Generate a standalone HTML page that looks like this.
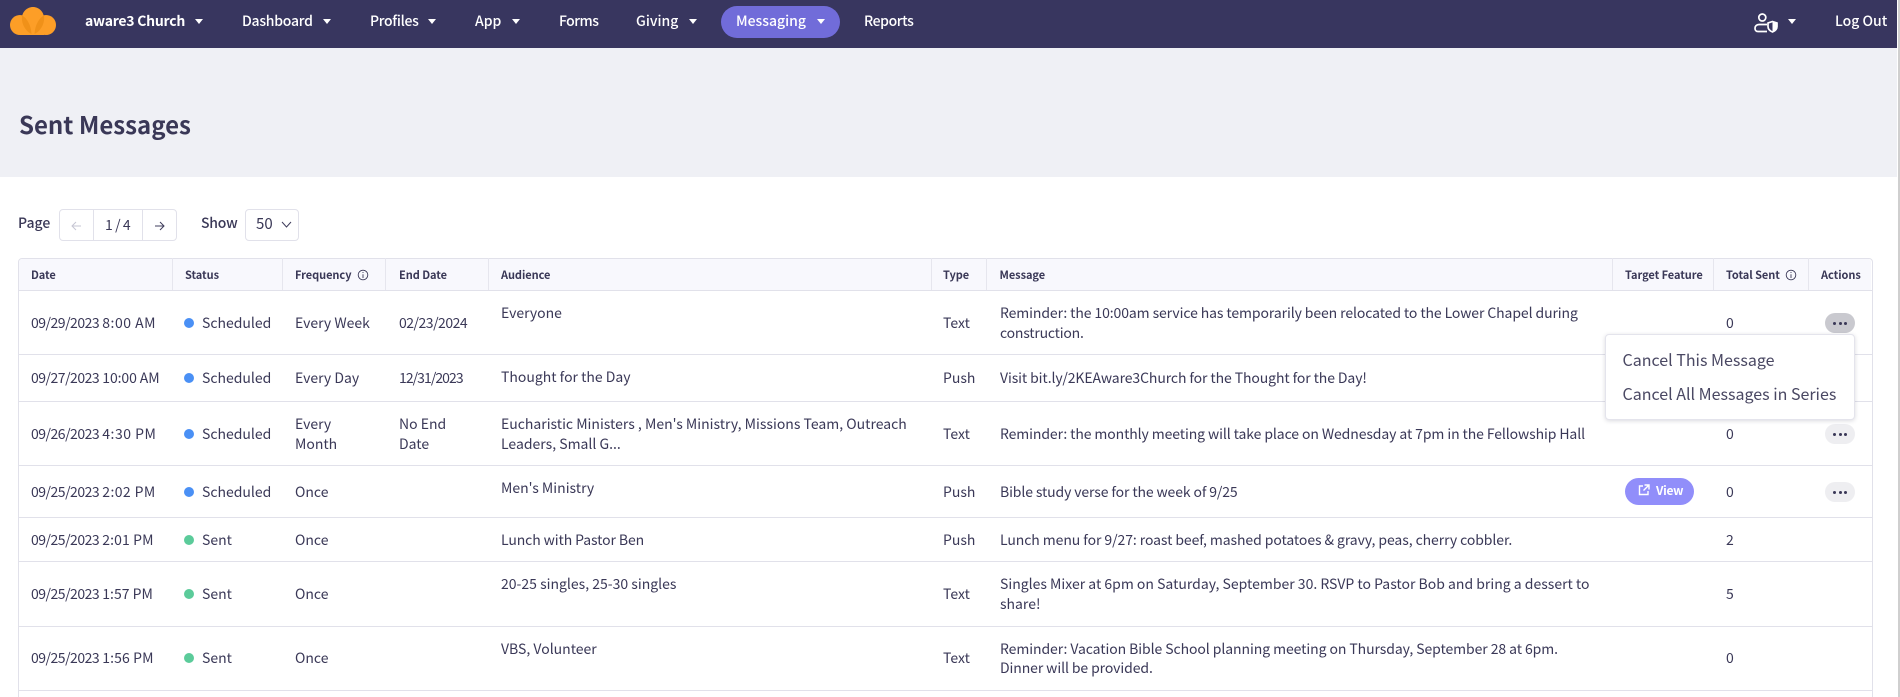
<!DOCTYPE html>
<html><head><meta charset="utf-8"><title>Sent Messages</title>
<style>
html,body{margin:0;padding:0;background:#fff;width:1900px;height:697px;overflow:hidden}
body{position:relative;font-family:"Noto Sans CJK JP","Liberation Sans",sans-serif;color:#3a3857;font-size:14px}
.a{position:absolute}
.t{position:absolute;white-space:nowrap;line-height:20px;height:20px}
.n{color:#fff;font-weight:500;font-size:14px;top:11px}
.h{font-size:11px;font-weight:700;top:265px;color:#3a3857;letter-spacing:-.05px}
.c{position:absolute;width:0;height:0;border-left:4.5px solid transparent;border-right:4.5px solid transparent;border-top:5px solid #fff;top:19px}
.hl{position:absolute;left:19px;width:1853px;height:1px;background:#e1e1ea}
.vl{position:absolute;top:258px;height:32px;width:1px;background:#e6e6ee}
.d{position:absolute;width:10px;height:10px;border-radius:50%;left:184px}
.bl{background:#4a90f5}.gr{background:#5bcb9a}
.b{position:absolute;left:1825px;width:30px;height:20px;border-radius:10px;background:#eeeef1}
.b i{position:absolute;top:9px;width:3px;height:3px;border-radius:50%;background:#3a3857}
.dt{letter-spacing:-.5px}
</style></head><body>
<div class="a" style="left:0;top:0;width:1897px;height:48px;background:#38365f"></div>
<div class="a" style="left:0;top:48px;width:1897px;height:129px;background:#eff0f5"></div>
<div class="a" style="left:1898px;top:0;width:2px;height:697px;background:#cfcfcf"></div>

<svg class="a" style="left:10px;top:7px" width="46" height="28" viewBox="0 0 46 28">
<circle cx="10" cy="18" r="10" fill="#fd9e27"/>
<circle cx="36" cy="18" r="10" fill="#fd9e27"/>
<path d="M12 11C12 5 17 0 23 0C29 0 34 5 34 11V28H10V11Z" fill="#fd9e27"/>
<path d="M12 8.500C17 11 21 18 21.500 27C15 24 11 16 12 8.500Z" fill="#f09119"/>
<path d="M34 8.500C29 11 25 18 24.500 27C31 24 35 16 34 8.500Z" fill="#f09119"/>
</svg>

<span class="t n" style="left:85px;font-weight:700;letter-spacing:-.25px">aware3 Church</span><i class="c" style="left:195px"></i>
<span class="t n" style="left:242px;letter-spacing:-.25px">Dashboard</span><i class="c" style="left:323px"></i>
<span class="t n" style="left:370px;letter-spacing:-.3px">Profiles</span><i class="c" style="left:428px"></i>
<span class="t n" style="left:475px">App</span><i class="c" style="left:512px"></i>
<span class="t n" style="left:559px;letter-spacing:-.5px">Forms</span>
<span class="t n" style="left:636px">Giving</span><i class="c" style="left:689px"></i>
<div class="a" style="left:721px;top:6px;width:119px;height:32px;border-radius:16px;background:#716cd9"></div>
<span class="t n" style="left:736px">Messaging</span><i class="c" style="left:817px"></i>
<span class="t n" style="left:864px;letter-spacing:-.4px">Reports</span>
<svg class="a" style="left:1754px;top:13px" width="24" height="20" viewBox="0 0 24 20" fill="none" stroke="#fff" stroke-width="1.700">
<circle cx="8.300" cy="4.500" r="3.500"/>
<path d="M13 11.500H5C2.500 11.500 1 13.200 1 15.200C1 17 2 18.500 4 18.500H13"/>
<path d="M18.500 8.500L23 10V13.500C23 16 21 18 18.500 19C16 18 14 16 14 13.500V10Z" fill="#38365f"/>
<path d="M18.500 9V18.500C21 17.500 22.500 15.800 22.500 13.500V10.300Z" fill="#fff" stroke="none"/>
</svg>
<i class="c" style="left:1788px"></i>
<span class="t n" style="left:1835px">Log Out</span>

<span class="t" style="left:19px;top:109px;height:30px;line-height:30px;font-size:24px;font-weight:700;color:#3a3857">Sent Messages</span>

<span class="t" style="left:18px;top:213px;font-weight:500">Page</span>
<div class="a" style="left:59px;top:209px;width:116px;height:30px;border:1px solid #e1e1ea;border-radius:4px"></div>
<div class="a" style="left:93px;top:209px;width:1px;height:32px;background:#e1e1ea"></div>
<div class="a" style="left:142px;top:209px;width:1px;height:32px;background:#e1e1ea"></div>
<svg class="a" style="left:71px;top:221px" width="11" height="10" viewBox="0 0 11 10" fill="none" stroke="#c6c6d3" stroke-width="1"><path d="M10 5H1M5 1L1 5L5 9"/></svg>
<span class="t" style="left:105px;top:215px;letter-spacing:-.4px">1 / 4</span>
<svg class="a" style="left:154px;top:221px" width="11" height="10" viewBox="0 0 11 10" fill="none" stroke="#3f3d5c" stroke-width="1"><path d="M1 5H10M6 1L10 5L6 9"/></svg>
<span class="t" style="left:201px;top:213px;font-weight:500;letter-spacing:-.2px">Show</span>
<div class="a" style="left:245px;top:209px;width:52px;height:30px;border:1px solid #e1e1ea;border-radius:4px"></div>
<span class="t" style="left:256px;top:214px;font-size:15px">50</span>
<svg class="a" style="left:281px;top:221px" width="11" height="7" viewBox="0 0 11 7" fill="none" stroke="#3f3d5c" stroke-width="1"><path d="M1 1L5.500 6L10 1"/></svg>

<!-- table frame -->
<div class="a" style="left:18px;top:258px;width:1853px;height:460px;border:1px solid #e1e1ea;border-radius:4px 4px 0 0"></div>
<div class="a" style="left:19px;top:259px;width:1852px;height:31px;background:#f8f8fd;border-radius:3px 3px 0 0"></div>
<div class="hl" style="top:290px"></div>
<div class="hl" style="top:354px"></div>
<div class="hl" style="top:401px"></div>
<div class="hl" style="top:465px"></div>
<div class="hl" style="top:517px"></div>
<div class="hl" style="top:561px"></div>
<div class="hl" style="top:626px"></div>
<div class="hl" style="top:690px"></div>
<div class="vl" style="left:172px"></div><div class="vl" style="left:282px"></div><div class="vl" style="left:385px"></div><div class="vl" style="left:488px"></div><div class="vl" style="left:931px"></div><div class="vl" style="left:986px"></div><div class="vl" style="left:1612px"></div><div class="vl" style="left:1713px"></div><div class="vl" style="left:1808px"></div>

<span class="t h" style="left:31px">Date</span>
<span class="t h" style="left:185px">Status</span>
<span class="t h" style="left:295px">Frequency</span>
<svg class="a" style="left:357px;top:269px" width="12" height="12" viewBox="0 0 12 12" fill="none" stroke="#3a3857" stroke-width=".9"><circle cx="6" cy="6" r="4.800"/><path d="M6 5.300V9M6 3V4"/></svg>
<span class="t h" style="left:399px">End Date</span>
<span class="t h" style="left:501px">Audience</span>
<span class="t h" style="left:943px">Type</span>
<span class="t h" style="left:999.500px">Message</span>
<span class="t h" style="left:1625px">Target Feature</span>
<span class="t h" style="left:1726px">Total Sent</span>
<svg class="a" style="left:1785px;top:269px" width="12" height="12" viewBox="0 0 12 12" fill="none" stroke="#3a3857" stroke-width=".9"><circle cx="6" cy="6" r="4.800"/><path d="M6 5.300V9M6 3V4"/></svg>
<span class="t h" style="left:1821px">Actions</span>

<!-- row 1 -->
<span class="t" style="left:31px;top:313px"><span class="dt">09/29/2023</span> <span style="letter-spacing:.5px">8:00 AM</span></span>
<i class="d bl" style="top:318px"></i><span class="t" style="left:202px;top:313px">Scheduled</span>
<span class="t" style="left:295px;top:313px">Every Week</span>
<span class="t" style="left:399px;top:313px;letter-spacing:-.5px">02/23/2024</span>
<span class="t" style="left:501px;top:303px">Everyone</span>
<span class="t" style="left:943px;top:313px">Text</span>
<span class="t" style="left:1000px;top:303px;letter-spacing:-.1px">Reminder: the 10:00am service has temporarily been relocated to the Lower Chapel during</span>
<span class="t" style="left:1000px;top:323px;letter-spacing:-.2px">construction.</span>
<span class="t" style="left:1726px;top:313px">0</span>
<div class="b" style="top:313px;background:#c9c9cf"><i style="left:8px"></i><i style="left:13.500px"></i><i style="left:19px"></i></div>

<!-- row 2 -->
<span class="t" style="left:31px;top:368px"><span class="dt">09/27/2023</span> <span style="letter-spacing:-.1px">10:00 AM</span></span>
<i class="d bl" style="top:373px"></i><span class="t" style="left:202px;top:368px">Scheduled</span>
<span class="t" style="left:295px;top:368px">Every Day</span>
<span class="t" style="left:399px;top:368px;letter-spacing:-.95px">12/31/2023</span>
<span class="t" style="left:501px;top:367px">Thought for the Day</span>
<span class="t" style="left:943px;top:368px">Push</span>
<span class="t" style="left:1000px;top:368px;letter-spacing:-.1px">Visit bit.ly/2KEAware3Church for the Thought for the Day!</span>

<!-- row 3 -->
<span class="t" style="left:31px;top:424px"><span class="dt">09/26/2023</span> <span style="letter-spacing:.5px">4:30 PM</span></span>
<i class="d bl" style="top:429px"></i><span class="t" style="left:202px;top:424px">Scheduled</span>
<span class="t" style="left:295px;top:414px">Every</span>
<span class="t" style="left:295px;top:434px">Month</span>
<span class="t" style="left:399px;top:414px">No End</span>
<span class="t" style="left:399px;top:434px">Date</span>
<span class="t" style="left:501px;top:414px">Eucharistic Ministers , Men's Ministry, Missions Team, Outreach</span>
<span class="t" style="left:501px;top:434px">Leaders, Small G...</span>
<span class="t" style="left:943px;top:424px">Text</span>
<span class="t" style="left:1000px;top:424px;letter-spacing:-.1px">Reminder: the monthly meeting will take place on Wednesday at 7pm in the Fellowship Hall</span>
<span class="t" style="left:1726px;top:424px">0</span>
<div class="b" style="top:424px"><i style="left:8px"></i><i style="left:13.500px"></i><i style="left:19px"></i></div>

<!-- row 4 -->
<span class="t" style="left:31px;top:482px"><span class="dt">09/25/2023</span> <span style="letter-spacing:.4px">2:02 PM</span></span>
<i class="d bl" style="top:487px"></i><span class="t" style="left:202px;top:482px">Scheduled</span>
<span class="t" style="left:295px;top:482px">Once</span>
<span class="t" style="left:501px;top:478px">Men's Ministry</span>
<span class="t" style="left:943px;top:482px">Push</span>
<span class="t" style="left:1000px;top:482px;letter-spacing:-.12px">Bible study verse for the week of 9/25</span>
<div class="a" style="left:1625px;top:478px;width:69px;height:27px;border-radius:14px;background:#918efa"></div>
<svg class="a" style="left:1638px;top:484px" width="12" height="12" viewBox="0 0 12 12" fill="none" stroke="#fff" stroke-width="1.400"><path d="M5 2H1.500V10.500H10V7M6.500 1H11V5.500M11 1L5.500 6.500"/></svg>
<span class="t" style="left:1656px;top:481px;font-size:12px;font-weight:700;color:#fff;letter-spacing:-.3px">View</span>
<span class="t" style="left:1726px;top:482px">0</span>
<div class="b" style="top:482px"><i style="left:8px"></i><i style="left:13.500px"></i><i style="left:19px"></i></div>

<!-- row 5 -->
<span class="t" style="left:31px;top:530px"><span class="dt">09/25/2023</span> <span style="letter-spacing:.1px">2:01 PM</span></span>
<i class="d gr" style="top:535px"></i><span class="t" style="left:202px;top:530px">Sent</span>
<span class="t" style="left:295px;top:530px">Once</span>
<span class="t" style="left:501px;top:530px;letter-spacing:-.1px">Lunch with Pastor Ben</span>
<span class="t" style="left:943px;top:530px">Push</span>
<span class="t" style="left:1000px;top:530px;letter-spacing:-.08px">Lunch menu for 9/27: roast beef, mashed potatoes &amp; gravy, peas, cherry cobbler.</span>
<span class="t" style="left:1726px;top:530px">2</span>

<!-- row 6 -->
<span class="t" style="left:31px;top:584px"><span class="dt">09/25/2023</span> 1:57 PM</span>
<i class="d gr" style="top:589px"></i><span class="t" style="left:202px;top:584px">Sent</span>
<span class="t" style="left:295px;top:584px">Once</span>
<span class="t" style="left:501px;top:574px">20-25 singles, 25-30 singles</span>
<span class="t" style="left:943px;top:584px">Text</span>
<span class="t" style="left:1000px;top:574px">Singles Mixer at 6pm on Saturday, September 30. RSVP to Pastor Bob and bring a dessert to</span>
<span class="t" style="left:1000px;top:594px">share!</span>
<span class="t" style="left:1726px;top:584px">5</span>

<!-- row 7 -->
<span class="t" style="left:31px;top:648px"><span class="dt">09/25/2023</span> <span style="letter-spacing:.1px">1:56 PM</span></span>
<i class="d gr" style="top:653px"></i><span class="t" style="left:202px;top:648px">Sent</span>
<span class="t" style="left:295px;top:648px">Once</span>
<span class="t" style="left:501px;top:639px">VBS, Volunteer</span>
<span class="t" style="left:943px;top:648px">Text</span>
<span class="t" style="left:1000px;top:639px;letter-spacing:-.08px">Reminder: Vacation Bible School planning meeting on Thursday, September 28 at 6pm.</span>
<span class="t" style="left:1000px;top:658px;letter-spacing:-.1px">Dinner will be provided.</span>
<span class="t" style="left:1726px;top:648px">0</span>

<!-- dropdown -->
<div class="a" style="left:1605px;top:334px;width:248px;height:84px;background:#fff;border:1px solid #e4e4ec;border-radius:4px;box-shadow:0 1px 4px rgba(50,50,80,.18)"></div>
<span class="t" style="left:1622.500px;top:349px;font-size:16px;color:#4a4863">Cancel This Message</span>
<span class="t" style="left:1622.500px;top:383px;font-size:16px;color:#4a4863">Cancel All Messages in Series</span>
</body></html>
